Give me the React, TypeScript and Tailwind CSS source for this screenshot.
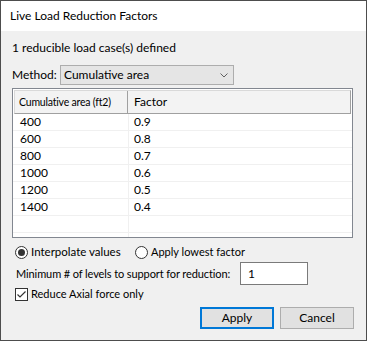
import React from "react";

const rows = [
  ["400", "0.9"],
  ["600", "0.8"],
  ["800", "0.7"],
  ["1000", "0.6"],
  ["1200", "0.5"],
  ["1400", "0.4"],
  ["", ""],
  ["", ""],
];

export default function App() {
  return (
    <div className="w-[367px] h-[341px] border border-[#4d4d4d] bg-[#f0f0f0] flex flex-col overflow-hidden font-['Lato',sans-serif] text-[12px] leading-[16px] text-black whitespace-nowrap">
      {/* Title bar */}
      <div className="h-[30px] bg-white flex items-center pl-[9px] shrink-0">
        Live Load Reduction Factors
      </div>

      <div className="flex flex-col px-[11px] pt-[9px]">
        <div>1 reducible load case(s) defined</div>

        {/* Method */}
        <div className="mt-[9px] flex items-center h-[20px]">
          <span className="w-[48px]">Method:</span>
          <div className="w-[174px] h-[20px] bg-[#e5e5e5] border border-[#adadad] flex items-center justify-between pl-[3px] pr-[5px]">
            <span>Cumulative area</span>
            <svg width="8" height="5" viewBox="0 0 8 5" className="text-[#606060]">
              <path d="M0.5 0.5 L4 4 L7.5 0.5" fill="none" stroke="currentColor" strokeWidth="1" />
            </svg>
          </div>
        </div>

        {/* Table */}
        <div className="mt-[3px] w-[341px] h-[150px] border border-[#828790] bg-white flex flex-col overflow-hidden">
          <div className="mx-[1px] mt-[1px] h-[24px] shrink-0 flex bg-[#f3f3f3] border border-[#d9d9d9] border-b-[#a0a0a0] border-r-[#a0a0a0]">
            <div className="w-[113px] shrink-0 border-r border-[#a0a0a0] pl-[4px] flex items-center text-[10.5px] tracking-[-0.2px]">Cumulative area (ft2)</div>
            <div className="flex-1 pl-[6px] flex items-center">Factor</div>
          </div>
          <div className="flex flex-col">
            {rows.map((r, i) => (
              <div key={i} className="h-[17px] shrink-0 flex border-b border-[#f0f0f0]">
                <div className="w-[116px] shrink-0 border-r border-[#f0f0f0] pl-[7px]">{r[0]}</div>
                <div className="flex-1 pl-[5px]">{r[1]}</div>
              </div>
            ))}
          </div>
        </div>

        {/* Radios */}
        <div className="mt-[6px] h-[16px] flex items-center text-[11.5px]">
          <label className="w-[120px] shrink-0 ml-[3px] flex items-center gap-[3px]">
            <span className="w-[13px] h-[13px] shrink-0 rounded-full border border-[#333] bg-white flex items-center justify-center">
              <span className="w-[7px] h-[7px] rounded-full bg-[#333]" />
            </span>
            <span>Interpolate values</span>
          </label>
          <label className="flex items-center gap-[3px]">
            <span className="w-[13px] h-[13px] shrink-0 rounded-full border border-[#333] bg-white" />
            <span className="text-[11px]">Apply lowest factor</span>
          </label>
        </div>

        {/* Minimum levels */}
        <div className="mt-[2px] flex items-center h-[23px]">
          <span className="ml-[4px] w-[224px] shrink-0 text-[11px] tracking-[-0.1px]">Minimum # of levels to support for reduction:</span>
          <div className="w-[68px] h-[23px] shrink-0 border border-[#7a7a7a] bg-white flex items-center pl-[7px]">1</div>
        </div>

        {/* Checkbox */}
        <div className="mt-[1px] h-[16px] flex items-center text-[11px]">
          <label className="ml-[3px] flex items-center gap-[3px]">
            <span className="w-[13px] h-[13px] shrink-0 border border-[#333] bg-white flex items-center justify-center">
              <svg width="11" height="11" viewBox="0 0 11 11">
                <path d="M1.5 5.5 L4 8 L9.5 2.5" fill="none" stroke="#333" strokeWidth="1.2" />
              </svg>
            </span>
            <span>Reduce Axial force only</span>
          </label>
        </div>

        {/* Buttons */}
        <div className="mt-[5px] flex justify-end gap-[6px] pr-[1px]">
          <button className="w-[74px] h-[22px] bg-[#e1e1e1] border-2 border-[#0078d7] flex items-center justify-center">Apply</button>
          <button className="w-[74px] h-[22px] bg-[#e1e1e1] border border-[#adadad] flex items-center justify-center">Cancel</button>
        </div>
      </div>
    </div>
  );
}
